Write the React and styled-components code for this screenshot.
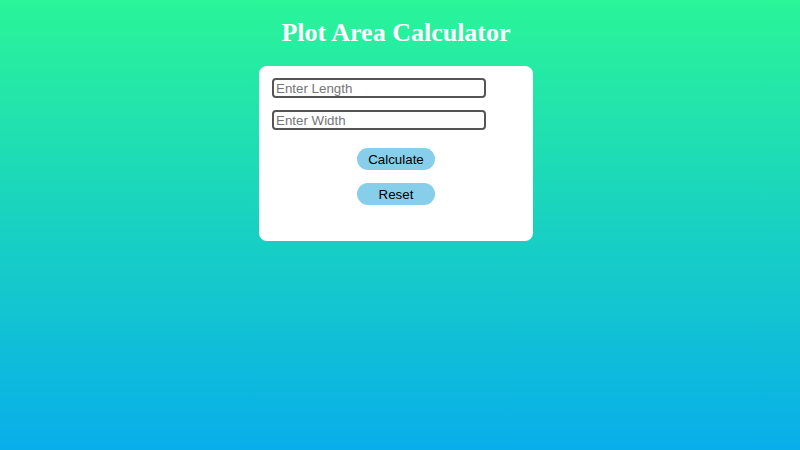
import styled, { createGlobalStyle } from 'styled-components';
import { useState } from 'react';

const GlobalStyle = createGlobalStyle`
  html {
    min-height: 100%;
    background-image: linear-gradient(0deg, #08aeea 0%, #2af598 100%);
    background-attachment: fixed;
  }
  body {
    margin: 0;
    font-family: "Liberation Sans", Arial, sans-serif;
  }
`;

const App = () => {
  const [length, setLength] = useState('');
  const [width, setWidth] = useState('');

  const handleReset = () => {
    setLength('');
    setWidth('');
  };

  return (
    <>
      <GlobalStyle />
      <St.Wrapper>
        <St.Title>Plot Area Calculator</St.Title>
        <St.Card>
          <St.Input
            type='text'
            placeholder='Enter Length'
            value={length}
            onChange={(e) => setLength(e.target.value)}
          />
          <St.Input
            type='text'
            placeholder='Enter Width'
            value={width}
            onChange={(e) => setWidth(e.target.value)}
          />
          <St.Actions>
            <St.Button type='button'>Calculate</St.Button>
            <St.Button type='button' onClick={handleReset}>
              Reset
            </St.Button>
          </St.Actions>
        </St.Card>
      </St.Wrapper>
    </>
  );
};

export default App;

const St = {
  // right padding stands in for the page scrollbar gutter
  Wrapper: styled.main`
    display: flex;
    flex-direction: column;
    align-items: center;
    min-height: 100vh;
    padding: 17px 8px 0 0;
    box-sizing: border-box;
  `,
  Title: styled.h1`
    margin: 0 0 17px 0;
    font-family: "Liberation Serif", "Times New Roman", serif;
    font-size: 26px;
    font-weight: bold;
    line-height: 32px;
    color: #ffffff;
  `,
  Card: styled.section`
    box-sizing: border-box;
    width: 274px;
    height: 175px;
    padding: 12px 13px;
    border-radius: 8px;
    background-color: #ffffff;
  `,
  Input: styled.input`
    display: block;
    box-sizing: border-box;
    width: 214px;
    height: 20px;
    margin: 0 0 12px 0;
    padding: 0 2px;
    border: 2px solid #555555;
    border-radius: 4px;
    font-family: "Liberation Sans", Arial, sans-serif;
    font-size: 13.333px;
    color: #222222;
    outline: none;

    &::placeholder {
      color: #757575;
    }
  `,
  Actions: styled.div`
    display: flex;
    flex-direction: column;
    align-items: center;
    gap: 13px;
    margin-top: 18px;
  `,
  Button: styled.button`
    width: 78px;
    height: 22px;
    padding: 0;
    border: none;
    border-radius: 11px;
    background-color: #87ceeb;
    font-family: "Liberation Sans", Arial, sans-serif;
    font-size: 13.333px;
    color: #000000;
    cursor: pointer;
  `,
};
